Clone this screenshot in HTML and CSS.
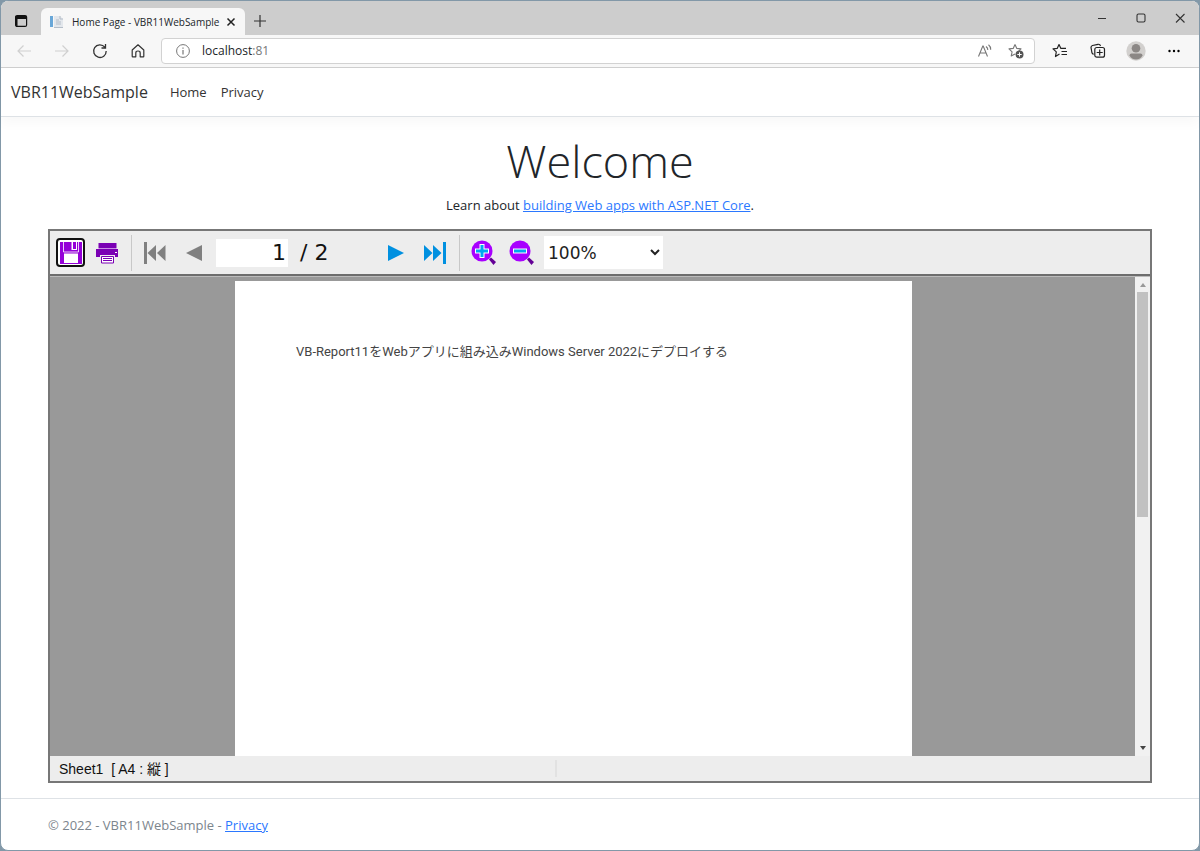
FILE: index.html
```html
<!DOCTYPE html>
<html lang="en">
<head>
<meta charset="utf-8">
<meta name="viewport" content="width=device-width, initial-scale=1">
<title>Home Page - VBR11WebSample</title>
<link rel="stylesheet" href="styles.css">
</head>
<body>
<div class="window">
  <div class="tabstrip">
    <button class="tab-actions" aria-label="Tab actions"><svg width="14" height="14" viewBox="0 0 14 14"><rect x="1.600" y="1.600" width="11" height="10.800" rx="1.500" fill="none" stroke="#111" stroke-width="1.200"/><path d="M1.500 2h11v3h-11zM1.500 4h2v8h-1l-1-1z" fill="#111"/></svg></button>
    <div class="tab">
      <svg width="14" height="14" viewBox="0 0 14 14"><path d="M0 1h3v11H0z" fill="#69a7d8"/><path d="M4 1h6l3 3v8H4z" fill="#e3e7ec"/><path d="M10 1v3h3M6 5h3M6 7h5M6 9h5M4 12.500h9" stroke="#b4bdc8" fill="none"/></svg>
      <span class="tab-title">Home Page - VBR11WebSample</span>
      <button class="tab-close" aria-label="Close tab"><svg width="10" height="10" viewBox="0 0 10 10"><path d="M1.500 1.500l7 7M8.500 1.500l-7 7" stroke="#222" stroke-width="1.500"/></svg></button>
    </div>
    <button class="new-tab" aria-label="New tab"><svg width="14" height="14" viewBox="0 0 14 14"><path d="M7 1v12M1 7h12" stroke="#333" stroke-width="1.200"/></svg></button>
    <div class="window-controls">
      <button aria-label="Minimize"><svg width="12" height="12" viewBox="0 0 12 12"><path d="M2 6.500h8" stroke="#333"/></svg></button>
      <button aria-label="Maximize"><svg width="12" height="12" viewBox="0 0 12 12"><rect x="2" y="2" width="8" height="8" rx="1.500" fill="none" stroke="#333" stroke-width="1.100"/></svg></button>
      <button aria-label="Close"><svg width="12" height="12" viewBox="0 0 12 12"><path d="M2 2l8.500 8.500M10.500 2L2 10.500" stroke="#333" stroke-width="1.100"/></svg></button>
    </div>
  </div>

  <div class="addressbar">
    <div class="nav-buttons">
      <button aria-label="Back" disabled><svg width="16" height="16" viewBox="0 0 16 16"><path d="M15 8H2M7.500 2.500L2 8l5.500 5.500" fill="none" stroke="#d0d0d0" stroke-width="1.200"/></svg></button>
      <button aria-label="Forward" disabled><svg width="16" height="16" viewBox="0 0 16 16"><path d="M1 8h13M8.500 2.500L14 8l-5.500 5.500" fill="none" stroke="#d0d0d0" stroke-width="1.200"/></svg></button>
      <button aria-label="Refresh"><svg width="16" height="16" viewBox="0 0 16 16"><path d="M14.200 8A6.300 6.300 0 1 1 12.800 4.200M13.500 1v4h-4" fill="none" stroke="#333" stroke-width="1.300"/></svg></button>
      <button aria-label="Home"><svg width="16" height="16" viewBox="0 0 16 16"><path d="M2.200 7L8 1.800 13.800 7v6.200q0 .6-.6.6h-3V10Q10.200 8 8 8T5.800 10v3.800h-3q-.6 0-.6-.6z" fill="none" stroke="#333" stroke-width="1.200" stroke-linejoin="round"/></svg></button>
    </div>
    <div class="urlbox">
      <svg width="14" height="14" viewBox="0 0 14 14"><circle cx="7" cy="7" r="6.400" fill="none" stroke="#777"/><path d="M7 6v4.500M7 3.500v1.200" stroke="#777" stroke-width="1.200"/></svg>
      <span class="url">localhost<span class="port">:81</span></span>
      <button aria-label="Read aloud"><svg width="16" height="16" viewBox="0 0 16 16"><path d="M1.500 13.500L5.800 3h.4l4.300 10.500M3 10h6M9 3.500q2 1.500 1.800 3.500M11.500 1.800q2.500 2 2.200 5" fill="none" stroke="#777" stroke-width="1.100"/></svg></button>
      <button aria-label="Add to favorites"><svg width="16" height="16" viewBox="0 0 16 16"><path d="M7 1.500l1.800 3.900 4.200.5-3.100 2.900.3 1.500M7 1.500L5.200 5.400 1 5.900 4.100 8.800 3.200 13 7 11" fill="none" stroke="#777" stroke-width="1.100" stroke-linejoin="round"/><circle cx="11.500" cy="11.500" r="4" fill="#555"/><path d="M11.500 9.300v4.400M9.300 11.500h4.400" stroke="#fff"/></svg></button>
    </div>
    <div class="browser-actions">
      <button aria-label="Favorites"><svg width="16" height="16" viewBox="0 0 16 16"><path d="M7.500 11L3.500 13.500l.8-4.600L1 5.900l4.200-.5L7 1.500l1.900 3.900H14M9.500 8.500H15M9.500 11.500H15" fill="none" stroke="#222" stroke-width="1.200" stroke-linejoin="round"/></svg></button>
      <button aria-label="Collections"><svg width="16" height="16" viewBox="0 0 16 16"><path d="M3.500 11.500L2 10 1 4.500Q1 3 2.500 2.500L8 1.300Q10 1 10.500 3" fill="none" stroke="#222" stroke-width="1.200"/><rect x="4.800" y="4.500" width="9.700" height="9.700" rx="2" fill="none" stroke="#222" stroke-width="1.200"/><path d="M9.700 6.500v6M6.700 9.500h6" stroke="#222" stroke-width="1.200"/></svg></button>
      <button aria-label="Profile"><svg width="20" height="20" viewBox="0 0 20 20"><circle cx="10" cy="10" r="9.700" fill="#d2d0ce"/><circle cx="10" cy="7.200" r="4.300" fill="#8b8785"/><path d="M3.500 14.500q0-2 2-2h9q2 0 2 2-2 4-6.500 4t-6.500-4z" fill="#8b8785"/></svg></button>
      <button aria-label="Settings and more"><svg width="14" height="14" viewBox="0 0 14 14"><circle cx="2.500" cy="7" r="1.200"/><circle cx="7" cy="7" r="1.200"/><circle cx="11.500" cy="7" r="1.200"/></svg></button>
    </div>
  </div>

  <header class="site-nav">
    <a class="brand" href="#">VBR11WebSample</a>
    <a class="nav-link" href="#">Home</a>
    <a class="nav-link" href="#privacy">Privacy</a>
  </header>

  <main class="content">
    <h1>Welcome</h1>
    <p class="intro">Learn about <a href="#learn">building Web apps with ASP.NET Core</a>.</p>

    <section class="viewer">
      <div class="viewer-toolbar">
        <button class="save" aria-label="Save"><svg width="24" height="24" viewBox="0 0 24 24"><path d="M1 1h22v22H1z" fill="#9400d8"/><path d="M4.500 1v10h15V1" fill="none" stroke="#fff" stroke-opacity=".8"/><path d="M12.500 1h5.500v8h-5.500zM5 12.500h14V22H5z" fill="#fff"/><path d="M14 1h3v7h-3z" fill="#9400d8"/></svg></button>
        <button class="print" aria-label="Print"><svg width="24" height="24" viewBox="0 0 24 24"><path d="M3.500 2h18v5h-18zM1 8h22v8h-3v-2H5v2H1z" fill="#7a00b4"/><path d="M3.500 7.500h18" stroke="#c98be6"/><path d="M6.500 15.500h12v6.500h-12z" fill="#fff" stroke="#7a00b4"/><path d="M8 17.500h9M8 19.500h9" stroke="#7a00b4" stroke-width="1.200"/><path d="M20 11h2v1h-2z" fill="#fff"/></svg></button>
        <span class="divider"></span>
        <button class="first" aria-label="First page"><svg width="24" height="24" viewBox="0 0 24 24"><path d="M1 1h3v22H1zM13 4v16L4.500 12zM22.500 4v16L14 12z" fill="#808080"/></svg></button>
        <button class="prev" aria-label="Previous page"><svg width="18" height="18" viewBox="0 0 18 18"><path d="M17 1v16L1 9z" fill="#808080"/></svg></button>
        <input class="page-number" type="text" value="1" aria-label="Page number">
        <span class="page-total">/ 2</span>
        <button class="next" aria-label="Next page"><svg width="18" height="18" viewBox="0 0 18 18"><path d="M1 1v16L17 9z" fill="#0090e0"/></svg></button>
        <button class="last" aria-label="Last page"><svg width="24" height="24" viewBox="0 0 24 24"><path d="M20 1h3v22h-3zM1 4v16l8.500-8zM10 4v16l8.500-8z" fill="#0090e0"/></svg></button>
        <span class="divider"></span>
        <button class="zoom-in" aria-label="Zoom in"><svg width="26" height="26" viewBox="0 0 26 26"><path d="M18 19.500l2-2 5 4.500-2.500 3z" fill="#640096"/><circle cx="11" cy="11" r="10.500" fill="#a800ff"/><path d="M11 4v14M4 11h14" stroke="#fff" stroke-width="5"/><path d="M11 5v12M5 11h12" stroke="#00a8f0" stroke-width="3"/></svg></button>
        <button class="zoom-out" aria-label="Zoom out"><svg width="26" height="26" viewBox="0 0 26 26"><path d="M18 19.500l2-2 5 4.500-2.500 3z" fill="#640096"/><circle cx="11" cy="11" r="10.500" fill="#a800ff"/><path d="M4 11h14" stroke="#fff" stroke-width="5"/><path d="M5 11h12" stroke="#00a8f0" stroke-width="3"/></svg></button>
        <select class="zoom-level" aria-label="Zoom level"><option>100%</option></select>
      </div>
      <div class="viewer-body">
        <div class="canvas"><article class="paper" lang="ja">VB-Report11をWebアプリに組み込みWindows Server 2022にデプロイする</article></div>
        <div class="scrollbar">
          <svg width="8" height="6" viewBox="0 0 8 6"><path d="M1 5h6L4 1z" fill="#999"/></svg>
          <div class="track"><div class="thumb"></div></div>
          <svg width="8" height="6" viewBox="0 0 8 6"><path d="M1 1h6L4 5z" fill="#444"/></svg>
        </div>
      </div>
      <div class="statusbar"><span class="sheet" lang="ja">Sheet1&nbsp; [ A4 : 縦 ]</span><span class="status-divider"></span></div>
    </section>
  </main>

  <footer class="site-footer">© 2022 - VBR11WebSample - <a href="#privacy" id="privacy">Privacy</a></footer>
</div>
</body>
</html>
```
FILE: styles.css
```css
* { box-sizing: border-box; }

body {
  margin: 0;
  background: #8298a8;
  color: #212529;
  font: 13px/20px "Open Sans", "Noto Sans", sans-serif;
}

button {
  display: flex;
  align-items: center;
  justify-content: center;
  flex: none;
  padding: 0;
  border: 0;
  background: none;
}

svg { display: block; flex: none; }

.window {
  display: flex;
  flex-direction: column;
  min-height: 100vh;
  border: 1px solid #8298a8;
  border-radius: 8px;
  background: #fff;
}

/* Browser frame */
.tabstrip {
  display: flex;
  align-items: flex-end;
  height: 34px;
  border-radius: 7px 7px 0 0;
  background: #cdcdcd;
}

.tab-actions { width: 40px; height: 28px; }

.tab {
  display: flex;
  align-items: center;
  gap: 8px;
  width: 204px;
  height: 27px;
  padding: 0 8px 0 9px;
  border-radius: 6px 6px 0 0;
  background: #f7f7f7;
}

.tab-title {
  flex: 1;
  min-width: 0;
  font-size: 10px;
  white-space: nowrap;
}

.tab-close { width: 12px; height: 20px; }
.new-tab { width: 30px; height: 28px; }

.window-controls { display: flex; margin-left: auto; }
.window-controls button { width: 39px; height: 34px; }

.addressbar {
  display: flex;
  align-items: center;
  height: 33px;
  border-bottom: 1px solid #cfcfcf;
  background: #f7f7f7;
}

.nav-buttons { display: flex; padding-left: 4px; }
.nav-buttons button { width: 38px; height: 28px; }

.urlbox {
  display: flex;
  flex: 1;
  align-items: center;
  height: 26px;
  margin-left: 4px;
  padding: 0 10px 0 14px;
  border: 1px solid #d2d2d2;
  border-radius: 4px;
  background: #fff;
  font-size: 12px;
}

.urlbox button { width: 16px; margin-left: 15px; }
.url { flex: 1; padding-left: 12px; }
.port { color: #777; }

.browser-actions { display: flex; padding: 0 6px; }
.browser-actions button { width: 38px; height: 28px; }

/* Site */
.site-nav {
  display: flex;
  align-items: center;
  height: 49px;
  padding: 0 10px;
  border-bottom: 1px solid #dee2e6;
  box-shadow: 0 6px 12px rgba(0, 0, 0, .03);
}

.site-nav a { color: #333; text-decoration: none; }
.site-nav .brand { margin-right: 15px; font-size: 16px; }
.nav-link { padding: 0 7px; }

.content {
  display: flex;
  flex: 1;
  flex-direction: column;
  padding: 13px 47px 15px;
}

h1 {
  margin: 0;
  font-size: 45px;
  font-weight: 300;
  line-height: 62px;
  text-align: center;
}

.intro { margin: 3px 0 14px; text-align: center; }
a { color: #2b78ff; }

.viewer {
  display: flex;
  flex: 1;
  flex-direction: column;
  border: 2px solid #777;
  background: #ededed;
}

.viewer-toolbar {
  display: flex;
  align-items: center;
  height: 45px;
  padding-left: 6px;
  border-bottom: 2px solid #6d6d6d;
}

.save {
  width: 29px;
  height: 29px;
  border: 2px solid #111;
  border-radius: 4px;
  background: #fff;
}

.print { margin-left: 10px; }

.divider {
  width: 1px;
  height: 36px;
  margin: 0 12px;
  background: #c8c8c8;
}

.viewer-toolbar .first,
.viewer-toolbar .zoom-in { margin-left: -1px; }

.prev { margin-left: 18px; }

.page-number {
  width: 72px;
  height: 28px;
  margin-left: 13px;
  padding: 2px;
  border: 0;
  background: #fff;
  color: #111;
  font: 22px/24px "DejaVu Sans", sans-serif;
  text-align: right;
}

.page-total {
  width: 87px;
  margin-left: 12px;
  color: #111;
  font: 22px/28px "DejaVu Sans", sans-serif;
}

.last { margin-left: 18px; }
.zoom-out { margin-left: 12px; }

.zoom-level {
  width: 119px;
  height: 33px;
  margin-left: 9px;
  padding: 0;
  border: 0;
  background: #fff;
  color: #222;
  font: 17px/28px "DejaVu Sans", sans-serif;
}

.viewer-body {
  display: flex;
  flex: 1;
  min-height: 320px;
  border-top: 1px solid #bbb;
  background: #999;
}

.canvas {
  display: flex;
  flex: 1;
  justify-content: center;
  padding: 4px 38px 0 0;
}

.paper {
  width: 677px;
  padding: 61px;
  background: #fff;
  color: #444;
  font: 13px/20px Roboto, "Noto Sans CJK JP", sans-serif;
}

.scrollbar {
  display: flex;
  flex-direction: column;
  align-items: center;
  width: 15px;
  padding: 5px 0;
  background: #f1f1f1;
}

.track { flex: 1; align-self: stretch; padding: 4px 2px; }
.thumb { width: 11px; height: 50%; background: #c1c1c1; }

.statusbar {
  display: flex;
  align-items: center;
  height: 25px;
  padding-left: 9px;
  color: #111;
  font: 14px/20px "Liberation Sans", "Noto Sans CJK JP", sans-serif;
}

.sheet { width: 496px; }
.status-divider { width: 2px; height: 17px; background: #e2e2e2; }

.site-footer {
  height: 52px;
  padding: 16px 47px;
  border-top: 1px solid #dee2e6;
  color: #7c858d;
}
```
